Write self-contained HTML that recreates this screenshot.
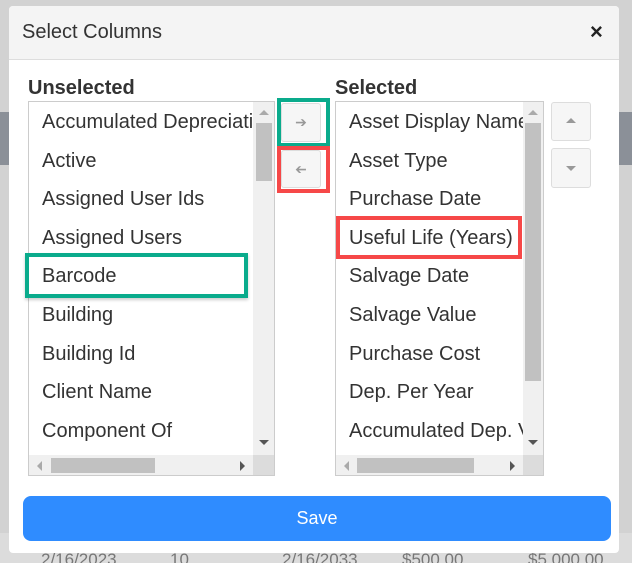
<!DOCTYPE html>
<html><head><style>
*{box-sizing:border-box;margin:0;padding:0}
html,body{width:632px;height:563px;overflow:hidden}
body{background:#d2d2d2;font-family:"Liberation Sans",Arial,sans-serif;color:#333;position:relative}
.abs{position:absolute}
.modal{left:9px;top:6px;width:610px;height:547px;background:#fff;border-radius:4px;overflow:hidden}
.hdr{left:0;top:0;width:610px;height:54px;background:#f4f4f4;border-bottom:1px solid #ddd}
.list{background:#fff;border:1px solid #ccc;overflow:hidden}
.item{position:absolute;left:13px;font-size:20px;white-space:nowrap;color:#333}
.vs{background:#f0f0f0}
.btn{background:#f6f6f6;border:1px solid #ddd;border-radius:3px;color:#999;font-size:14px;text-align:center}
.bt{position:absolute;top:550px;font-size:17px;color:#777}
</style></head><body>
<div class="abs" style="left:0;top:112px;width:9px;height:53px;background:#8b9098"></div>
<div class="abs" style="left:619px;top:112px;width:13px;height:53px;background:#8b9098"></div>
<div class="abs" style="left:0;top:533px;width:632px;height:30px;background:#dcdcdc"></div>
<div class="bt" style="left:41px">2/16/2023</div>
<div class="bt" style="left:170px">10</div>
<div class="bt" style="left:282px">2/16/2033</div>
<div class="bt" style="left:402px">$500.00</div>
<div class="bt" style="left:528px">$5,000.00</div>
<div class="abs modal">
 <div class="abs hdr"></div>
 <div class="abs" style="left:13px;top:15px;font-size:20px;color:#333">Select Columns</div>
 <div class="abs" style="left:581px;top:13px;font-size:22px;font-weight:bold;color:#222">×</div>
</div>
<div class="abs" style="left:28px;top:77px;font-size:20px;font-weight:bold;color:#333">Unselected</div>
<div class="abs" style="left:335px;top:77px;font-size:20px;font-weight:bold;color:#333">Selected</div>

<div class="abs list" style="left:28px;top:101px;width:247px;height:375px">
 <div class="item" style="top:9px">Accumulated Depreciation</div>
 <div class="item" style="top:48px">Active</div>
 <div class="item" style="top:86px">Assigned User Ids</div>
 <div class="item" style="top:125px">Assigned Users</div>
 <div class="item" style="top:163px">Barcode</div>
 <div class="item" style="top:202px">Building</div>
 <div class="item" style="top:241px">Building Id</div>
 <div class="item" style="top:279px">Client Name</div>
 <div class="item" style="top:318px">Component Of</div>
 <div class="abs vs" style="left:224px;top:0;width:22px;height:374px"></div>
 <div class="abs" style="left:227px;top:21px;width:16px;height:58px;background:#c1c1c1"></div>
 <div class="abs" style="left:230px;top:8px;border:5px solid transparent;border-bottom-color:#aaa;border-top:0"></div>
 <div class="abs" style="left:230px;top:338px;border:5px solid transparent;border-top-color:#555;border-bottom:0"></div>
 <div class="abs vs" style="left:0;top:353px;width:246px;height:21px"></div>
 <div class="abs" style="left:224px;top:353px;width:22px;height:21px;background:#dcdcdc"></div>
 <div class="abs" style="left:22px;top:356px;width:104px;height:15px;background:#c1c1c1"></div>
 <div class="abs" style="left:8px;top:359px;border:5px solid transparent;border-right-color:#aaa;border-left:0"></div>
 <div class="abs" style="left:211px;top:359px;border:5px solid transparent;border-left-color:#555;border-right:0"></div>
</div>

<div class="abs list" style="left:335px;top:101px;width:209px;height:375px">
 <div class="item" style="top:9px;width:175px;overflow:hidden">Asset Display Name</div>
 <div class="item" style="top:48px">Asset Type</div>
 <div class="item" style="top:86px">Purchase Date</div>
 <div class="item" style="top:125px">Useful Life (Years)</div>
 <div class="item" style="top:163px">Salvage Date</div>
 <div class="item" style="top:202px">Salvage Value</div>
 <div class="item" style="top:241px">Purchase Cost</div>
 <div class="item" style="top:279px">Dep. Per Year</div>
 <div class="item" style="top:318px;width:175px;overflow:hidden">Accumulated Dep. Value</div>
 <div class="abs vs" style="left:187px;top:0;width:21px;height:374px"></div>
 <div class="abs" style="left:189px;top:21px;width:16px;height:258px;background:#c1c1c1"></div>
 <div class="abs" style="left:192px;top:8px;border:5px solid transparent;border-bottom-color:#aaa;border-top:0"></div>
 <div class="abs" style="left:192px;top:338px;border:5px solid transparent;border-top-color:#555;border-bottom:0"></div>
 <div class="abs vs" style="left:0;top:353px;width:208px;height:21px"></div>
 <div class="abs" style="left:187px;top:353px;width:21px;height:21px;background:#dcdcdc"></div>
 <div class="abs" style="left:21px;top:356px;width:117px;height:15px;background:#c1c1c1"></div>
 <div class="abs" style="left:8px;top:359px;border:5px solid transparent;border-right-color:#aaa;border-left:0"></div>
 <div class="abs" style="left:174px;top:359px;border:5px solid transparent;border-left-color:#555;border-right:0"></div>
</div>

<div class="abs btn" style="left:281px;top:103px;width:40px;height:39px;line-height:37px">➔</div>
<div class="abs btn" style="left:281px;top:150px;width:40px;height:38px;line-height:36px"><span style="display:inline-block;transform:scaleX(-1)">➔</span></div>
<div class="abs" style="left:277px;top:98px;width:53px;height:49px;border:4px solid #0aab8c"></div>
<div class="abs" style="left:277px;top:146px;width:53px;height:47px;border:4px solid #f64848"></div>
<div class="abs btn" style="left:551px;top:102px;width:40px;height:39px"><div class="abs" style="left:14px;top:15px;border:5px solid transparent;border-bottom-color:#999;border-top:0"></div></div>
<div class="abs btn" style="left:551px;top:148px;width:40px;height:40px"><div class="abs" style="left:14px;top:17px;border:5px solid transparent;border-top-color:#999;border-bottom:0"></div></div>
<div class="abs" style="left:336px;top:216px;width:186px;height:43px;border:4px solid #f64848"></div>
<div class="abs" style="left:25px;top:253px;width:223px;height:45px;border:4px solid #0aab8c;box-shadow:0 2px 3px rgba(0,0,0,.2)"></div>

<div class="abs" style="left:23px;top:496px;width:588px;height:45px;background:#2f8cff;border-radius:8px;color:#fff;font-size:18px;text-align:center;line-height:45px">Save</div>
</body></html>
